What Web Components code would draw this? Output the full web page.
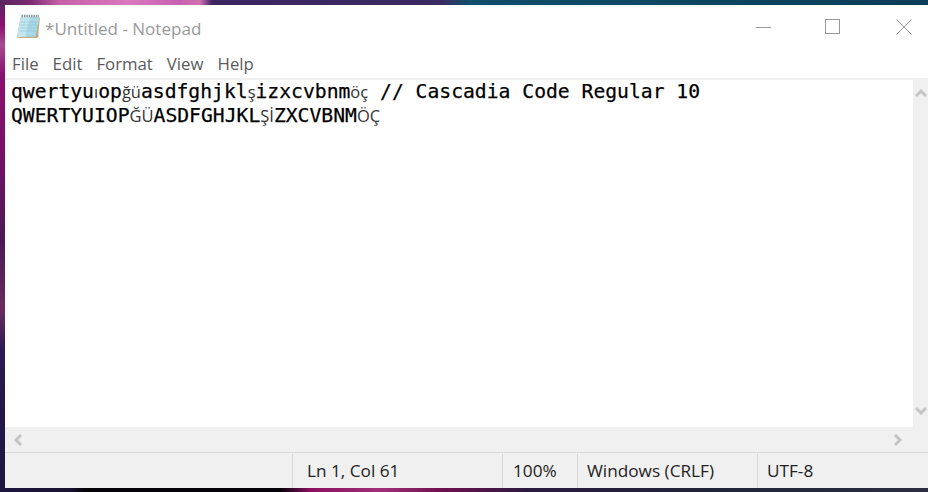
<!DOCTYPE html>
<html>
<head>
<meta charset="utf-8">
<title>Notepad</title>
<style>
  html, body { margin: 0; height: 100%; overflow: hidden; }
  body {
    width: 928px;
    height: 492px;
    display: flex;
    flex-direction: column;
    box-sizing: border-box;
    padding: 5px 0 4px 5px;
    background:
      linear-gradient(90deg, #5a2560 0, #7a2a70 30px, #c860a8 60px, #d878bc 130px, #c860b0 180px, #d070b0 200px, #3d2560 212px, #3a2a60 440px, #0f4d6a 470px, #0d4560 700px, #0c3c58 928px) 0 0 / 928px 5px no-repeat,
      linear-gradient(90deg, #1d1640 0, #1a1230 70px, #050208 85px, #050208 280px, #8a1060 310px, #a03078 380px, #701050 440px, #2a1a40 530px, #202438 700px, #2a2e40 928px) 0 488px / 928px 4px no-repeat,
      linear-gradient(180deg, #5a2560 0, #8a1070 25px, #a84a90 45px, #8a1070 75px, #7a1065 150px, #4a1a55 240px, #6a2a60 310px, #2a1a50 350px, #1d1640 492px);
    font-family: "Open Sans", "Noto Sans", sans-serif;
  }
  notepad-window { flex: 1; min-height: 0; }
</style>
</head>
<body>
<notepad-window>
  <span slot="title">*Untitled - Notepad</span>
  <menu-item>File</menu-item>
  <menu-item>Edit</menu-item>
  <menu-item>Format</menu-item>
  <menu-item>View</menu-item>
  <menu-item>Help</menu-item>
  <text-area slot="editor">
    <code-line>qwertyu<fb-glyph>ı</fb-glyph>op<fb-glyph>ğü</fb-glyph>asdfghjkl<fb-glyph>ş</fb-glyph>izxcvbnm<fb-glyph>öç</fb-glyph> // Cascadia Code Regular 10</code-line>
    <code-line>QWERTYUIOP<fb-glyph>ĞÜ</fb-glyph>ASDFGHJKL<fb-glyph>Şİ</fb-glyph>ZXCVBNM<fb-glyph>ÖÇ</fb-glyph></code-line>
  </text-area>
  <status-cell slot="status" style="width:210px;padding-left:14px">Ln 1, Col 61</status-cell>
  <status-cell slot="status" style="width:75px;padding-left:10px">100%</status-cell>
  <status-cell slot="status" style="width:180px">Windows (CRLF)</status-cell>
  <status-cell slot="status" style="width:171px">UTF-8</status-cell>
</notepad-window>

<script>
class NotepadWindow extends HTMLElement {
  constructor() {
    super();
    this.attachShadow({ mode: "open" }).innerHTML = `
      <style>
        :host { display: flex; flex-direction: column; background: #fff; }
        .titlebar { height: 44px; display: flex; align-items: center; flex: none; }
        .app-icon { margin-left: 11px; width: 26px; height: 26px; flex: none; }
        .title { margin-left: 3px; font-size: 17.05px; color: #999; position: relative; top: 1px; }
        .caption { margin-left: auto; display: flex; align-items: center; }
        .caption svg { display: block; width: 16px; height: 16px; margin-left: 54px; }
        .caption svg:last-child { margin-right: 16px; }
        .menubar { height: 29px; flex: none; display: flex; padding-left: 7px; gap: 14px; align-items: center; border-bottom: 2px solid #f0f0f0; box-sizing: content-box; }
        .middle { flex: 1; min-height: 0; display: flex; }
        .vscroll { width: 15px; flex: none; background: #f0f0f0; display: flex; flex-direction: column; justify-content: space-between; padding: 7px 0 10px; box-sizing: border-box; align-items: center; }
        .hscroll { height: 25px; flex: none; background: #f0f0f0; display: flex; justify-content: space-between; align-items: center; padding: 0 24px 0 7px; }
        .statusbar { height: 36px; flex: none; background: #f0f0f0; border-top: 1px solid #d8d8d8; display: flex; justify-content: flex-end; box-sizing: border-box; padding-right: 0; }
        svg.arrow { display: block; width: 12px; height: 12px; fill: none; stroke: #c4c4c4; stroke-width: 3; }
      </style>
      <div class="titlebar">
        <svg class="app-icon" viewBox="0 0 26 26">
          <path d="M4.5 4 L22 4 L22.5 23 L1 23.5 Z" fill="#b39f7a"/>
          <path d="M5 3 L23 3 L20 23 L1 23 Z" fill="#a7d8e6"/>
          <path d="M5 3 L14 3 L9 23 L1 23 Z" fill="#c3e6ee"/>
          <path d="M20 22.5 L23 3.5 L24 4 L21.5 24 L2 24 L2 23 Z" fill="#c2ad84"/>
          <path d="M5.5 2 H23" stroke="#7b8a92" stroke-width="2.4" stroke-dasharray="1.4 1"/>
          <path d="M5 8H21M4.6 11H20.6M4.2 14H20.2M3.8 17H19.8" stroke="#8ec4d6" stroke-width=".6"/>
        </svg>
        <div class="title"><slot name="title"></slot></div>
        <div class="caption">
          <svg viewBox="0 0 16 16"><path d="M1 8.5H16" stroke="#999" stroke-width="1"/></svg>
          <svg viewBox="0 0 16 16" style="margin-left:54px"><rect x=".5" y=".5" width="14" height="14" fill="none" stroke="#999" stroke-width="1"/></svg>
          <svg viewBox="0 0 16 16" style="margin-left:55px"><path d="M.5 .5L15.5 15.5M15.5 .5L.5 15.5" stroke="#999" stroke-width="1" fill="none"/></svg>
        </div>
      </div>
      <div class="menubar"><slot></slot></div>
      <div class="middle">
        <slot name="editor"></slot>
        <div class="vscroll">
          <svg class="arrow" viewBox="0 0 12 12"><path d="M1 9L6 4L11 9"/></svg>
          <svg class="arrow" viewBox="0 0 12 12"><path d="M1 3L6 8L11 3"/></svg>
        </div>
      </div>
      <div class="hscroll">
        <svg class="arrow" viewBox="0 0 12 12"><path d="M9 1L4 6L9 11"/></svg>
        <svg class="arrow" viewBox="0 0 12 12"><path d="M3 1L8 6L3 11"/></svg>
      </div>
      <div class="statusbar"><slot name="status"></slot></div>
    `;
  }
}

class MenuItem extends HTMLElement {
  constructor() {
    super();
    this.attachShadow({ mode: "open" }).innerHTML = `<style>:host { display: block; font-size: 16.8px; color: #5a5a5a; }</style><slot></slot>`;
  }
}

class TextArea extends HTMLElement {
  constructor() {
    super();
    this.attachShadow({ mode: "open" }).innerHTML = `<style>:host { display: block; flex: 1; min-width: 0; background: #fff; padding: 0 0 0 6px; }</style><slot></slot>`;
  }
}

// no whitespace around the slot here: white-space: pre would draw it
class CodeLine extends HTMLElement {
  constructor() {
    super();
    this.attachShadow({ mode: "open" }).innerHTML = `<style>:host { display: block; height: 24px; line-height: 24px; white-space: pre; color: #000; font-family: "DejaVu Sans Mono", monospace; font-size: 19.7px; font-weight: 500; -webkit-text-stroke: .25px #000; }</style><slot></slot>`;
  }
}

// the letters the code font lacks come out smaller and thinner, as a fallback would
class FbGlyph extends HTMLElement {
  constructor() {
    super();
    this.attachShadow({ mode: "open" }).innerHTML = `<style>:host { display: inline; font-family: "Open Sans", sans-serif; font-size: 16.5px; font-weight: 400; -webkit-text-stroke: 0; color: #333; }</style><slot></slot>`;
  }
}

class StatusCell extends HTMLElement {
  constructor() {
    super();
    this.attachShadow({ mode: "open" }).innerHTML = `
      <style>
        :host { display: flex; align-items: center; box-sizing: border-box; padding: 0 0 2px 9px; margin-top: 1px;
          border-left: 1px solid #d8d8d8; font-size: 17.2px; color: #222; white-space: nowrap; }
      </style>
      <slot></slot>
    `;
  }
}

customElements.define("notepad-window", NotepadWindow);
customElements.define("menu-item", MenuItem);
customElements.define("text-area", TextArea);
customElements.define("code-line", CodeLine);
customElements.define("fb-glyph", FbGlyph);
customElements.define("status-cell", StatusCell);
</script>
</body>
</html>
